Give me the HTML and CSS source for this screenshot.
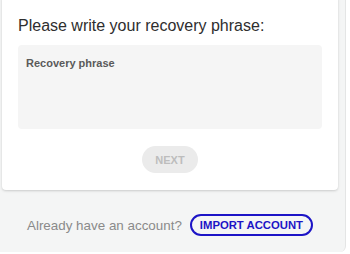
FILE: index.html
```html
<!DOCTYPE html>
<html>
<head>
<meta charset="utf-8">
<link rel="stylesheet" href="styles.css">
</head>
<body>
<div class="outer">
  <div class="card">
    <h1 class="title">Please write your recovery phrase:</h1>
    <div class="field">
      <label class="label">Recovery phrase</label>
    </div>
    <div class="actions">
      <button class="next" disabled>NEXT</button>
    </div>
  </div>
  <div class="footer">
    <span class="already">Already have an account?</span>
    <button class="import">IMPORT ACCOUNT</button>
  </div>
</div>
</body>
</html>
```
FILE: styles.css
```css
html, body {
  margin: 0;
  padding: 0;
  background: #ffffff;
  font-family: "Liberation Sans", Arial, sans-serif;
}
.outer {
  width: 345px;
  height: 252px;
  background: #f4f5f5;
  border-right: 1px solid #e4e5e5;
  border-bottom-right-radius: 6px;
  overflow: hidden;
}
.card {
  margin-left: 2px;
  margin-top: -6px;
  width: 336px;
  box-sizing: border-box;
  padding: 22px 16px 17px;
  background: #fff;
  border-radius: 4px;
  box-shadow: 0 1px 3px rgba(0,0,0,0.12), 0 1px 2px rgba(0,0,0,0.06);
}
.title {
  margin: 0;
  font-size: 16px;
  line-height: 19px;
  font-weight: normal;
  color: #2e2e2e;
}
.field {
  margin-top: 10px;
  height: 84px;
  background: #f5f5f5;
  border-radius: 4px;
  box-sizing: border-box;
  padding: 12px 8px;
}
.label {
  display: block;
  font-size: 11px;
  line-height: 13px;
  font-weight: bold;
  color: #5a5a5a;
}
.actions {
  margin-top: 17px;
  display: flex;
  justify-content: center;
}
.next {
  width: 56px;
  height: 27px;
  border: none;
  border-radius: 14px;
  background: #ebebeb;
  color: #bdbdbd;
  font-family: "Liberation Sans", Arial, sans-serif;
  font-size: 11px;
  font-weight: bold;
  padding: 0;
}
.footer {
  width: 340px;
  margin-top: 24px;
  display: flex;
  justify-content: center;
  align-items: center;
  gap: 8px;
}
.already {
  font-size: 13.4px;
  color: #8a8a8a;
}
.import {
  height: 22px;
  box-sizing: border-box;
  border: 2px solid #1c14c6;
  border-radius: 11px;
  background: transparent;
  color: #1c14c6;
  font-family: "Liberation Sans", Arial, sans-serif;
  font-size: 11.3px;
  font-weight: bold;
  padding: 0 8px;
}
```
